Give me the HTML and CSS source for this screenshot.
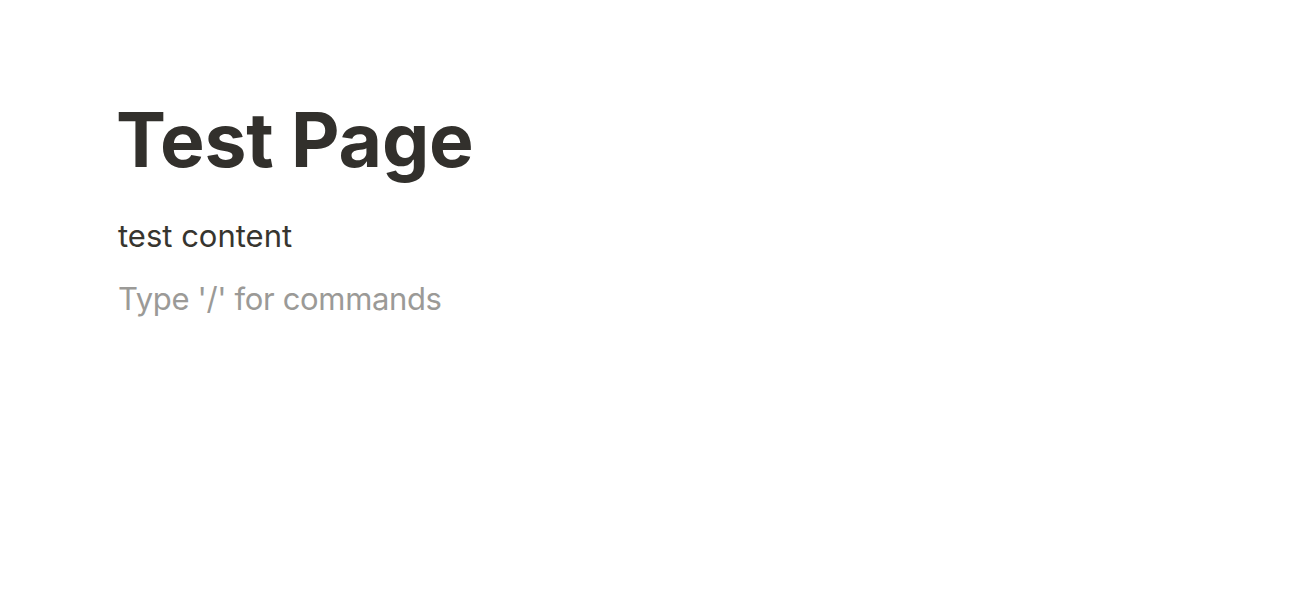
FILE: index.html
```html
<!DOCTYPE html>
<html>
<head>
<meta charset="utf-8">
<link rel="stylesheet" href="styles.css">
</head>
<body>
<main class="page">
  <h1 class="title">Test Page</h1>
  <div class="block">test content</div>
  <div class="block placeholder">Type '/' for commands</div>
</main>
</body>
</html>
```
FILE: styles.css
```css
html, body {
  margin: 0;
  padding: 0;
  background: #ffffff;
}
body {
  font-family: Inter, "Liberation Sans", sans-serif;
  color: #37352f;
}
.page {
  padding: 95px 118px 0 118px;
  display: flex;
  flex-direction: column;
}
.title {
  margin: 0 0 0 -2px;
  font-size: 75px;
  font-weight: 700;
  line-height: 1.2;
  letter-spacing: -0.2px;
  color: #32302c;
}
.block {
  font-size: 31px;
  line-height: 46px;
  padding: 8px 0;
}
.title + .block {
  margin-top: 20px;
}
.placeholder {
  color: #9b9a97;
  letter-spacing: -0.35px;
  margin-top: 1px;
}
```
